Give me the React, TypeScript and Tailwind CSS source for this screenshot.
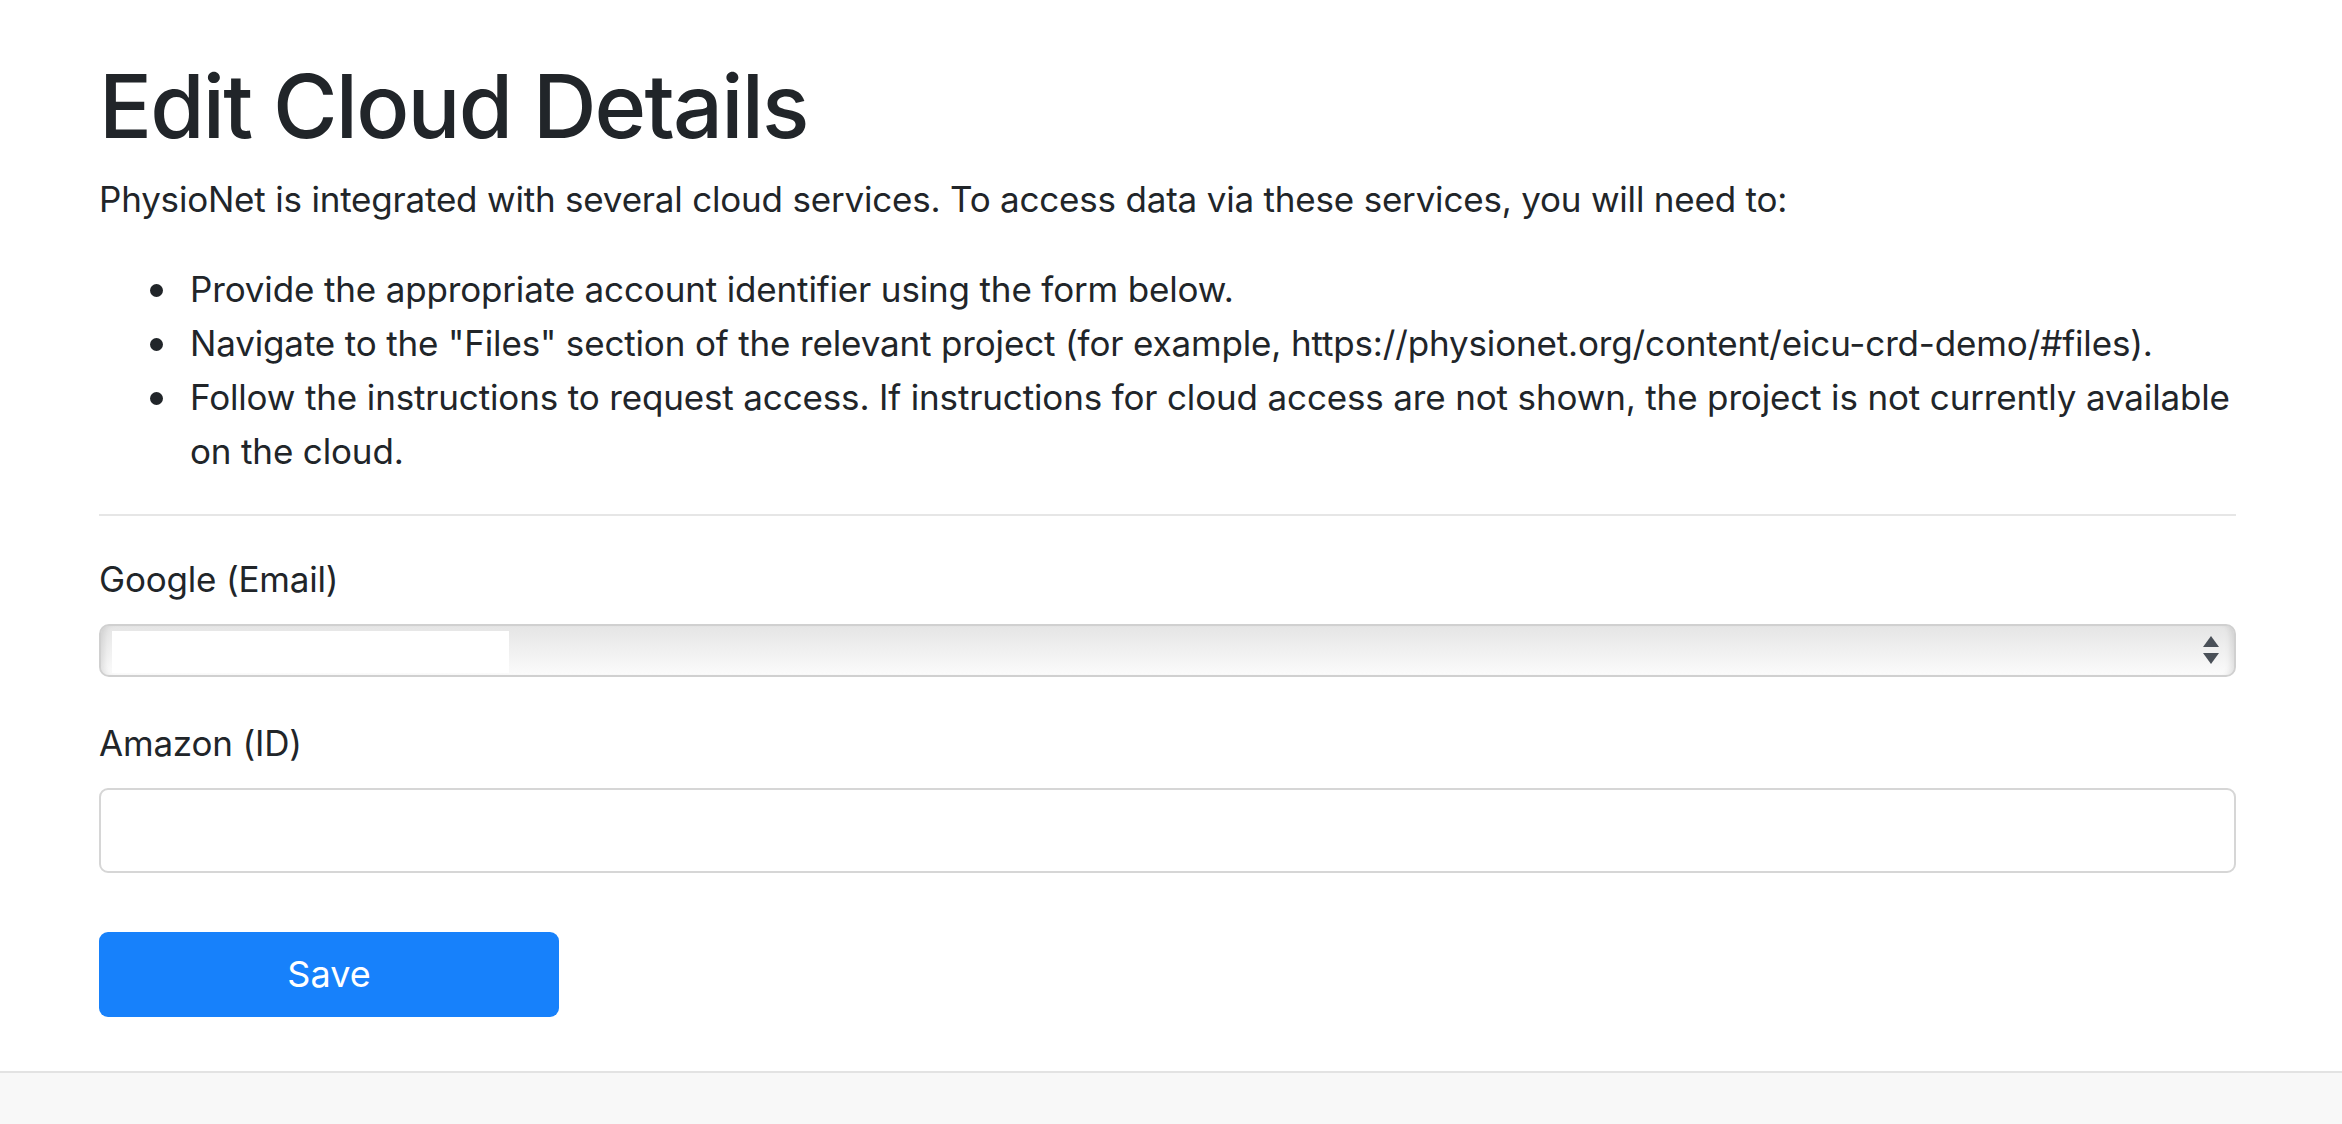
const items = [
  'Provide the appropriate account identifier using the form below.',
  'Navigate to the "Files" section of the relevant project (for example, https://physionet.org/content/eicu-crd-demo/#files).',
  'Follow the instructions to request access. If instructions for cloud access are not shown, the project is not currently available on the cloud.',
];

function SelectArrows() {
  return (
    <svg width="18" height="32" viewBox="0 0 18 32" className="ml-auto mr-[14px]">
      <path d="M9 2 L17 13 L1 13 Z" fill="#4a5058" />
      <path d="M1 19 L17 19 L9 30 Z" fill="#4a5058" />
    </svg>
  );
}

export default function App() {
  return (
    <div className="min-h-screen flex flex-col bg-white text-[#212529] font-['Inter','Helvetica_Neue',Arial,sans-serif]">
      <main className="flex-1 pl-[99px] pr-[106px]">
        <h1 className="mt-[54px] mb-[12px] text-[88px] font-medium leading-[1.2] tracking-[-1.8px]">Edit Cloud Details</h1>
        <p className="text-[35px] leading-[54px] tracking-[-0.2px] mb-[36px]">
          PhysioNet is integrated with several cloud services. To access data via these services, you will need to:
        </p>
        <ul className="pl-[91px] text-[35px] leading-[54px] tracking-[-0.15px] mb-[36px]">
          {items.map((t) => (
            <li key={t} className="relative">
              <span className="absolute left-[-40px] top-[22px] h-[13px] w-[13px] rounded-full bg-[#212529]" />
              {t}
            </li>
          ))}
        </ul>
        <hr className="border-0 border-t-2 border-[#e6e6e6] mb-[36px]" />

        <form onSubmit={(e) => e.preventDefault()}>
          <div className="mb-[39px]">
            <label className="block text-[35px] leading-[54px] tracking-[-0.2px] mb-[18px]">Google (Email)</label>
            <div className="flex items-center h-[53px] rounded-[10px] border-2 border-[#d0d0d0] bg-linear-to-b from-[#e5e5e5] via-[#f0f0f0] to-[#fbfbfb] shadow-[inset_8px_0_6px_-5px_rgba(0,0,0,0.10),inset_-8px_0_6px_-5px_rgba(0,0,0,0.10)]">
              <div className="ml-[11px] mt-[4px] h-[42px] w-[397px] bg-white" />
              <SelectArrows />
            </div>
          </div>

          <div className="mb-[59px]">
            <label className="block text-[35px] leading-[54px] tracking-[-0.2px] mb-[18px]">Amazon (ID)</label>
            <input
              type="text"
              className="block w-full h-[85px] rounded-[9px] border-2 border-[#d6d6d6] bg-white px-[27px] text-[35px] outline-none"
            />
          </div>

          <button
            type="submit"
            className="w-[460px] h-[85px] rounded-[9px] bg-[#1781fb] text-white text-[36px] leading-none"
          >
            Save
          </button>
        </form>
      </main>
      <footer className="h-[53px] border-t-2 border-[#e3e3e3] bg-[#f8f8f8]" />
    </div>
  );
}
